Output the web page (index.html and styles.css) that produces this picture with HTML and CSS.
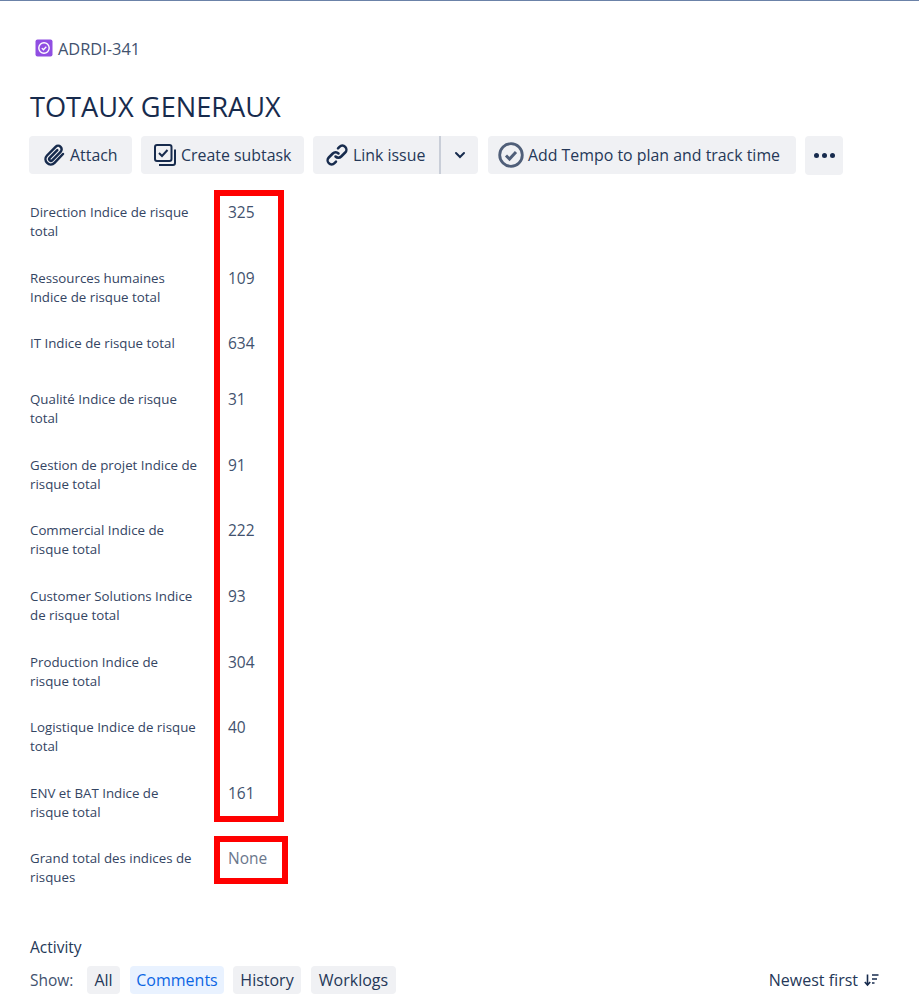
FILE: index.html
```html
<!DOCTYPE html>
<html lang="en">
<head>
<meta charset="utf-8">
<title>ADRDI-341</title>
<link rel="stylesheet" href="styles.css">
</head>
<body>
<main class="page">
  <div class="crumb">
    <svg class="crumb-icon" viewBox="0 0 18 18"><rect x="0.5" y="0.5" width="17" height="17" rx="2" fill="#904ee2"/><circle cx="9" cy="9" r="5.2" fill="none" stroke="#fff" stroke-width="1.4"/><path d="M6.8 9.1l1.6 1.6 2.9-3" fill="none" stroke="#fff" stroke-width="1.3"/></svg>
    <span>ADRDI-341</span>
  </div>
  <h1 class="title">TOTAUX GENERAUX</h1>
  <div class="toolbar">
    <button class="btn btn-attach"><svg class="ico" viewBox="0 0 24 24"><path d="M21 11l-8.500 8.800a5.200 5.200 0 0 1-7.500-7.300L13.600 3.800a3.500 3.500 0 0 1 5 5l-8.400 8.500a1.700 1.700 0 0 1-2.500-2.400l7.600-7.700" fill="none" stroke="#172b4d" stroke-width="2.500" stroke-linecap="round"/></svg>Attach</button>
    <button class="btn btn-sub"><svg class="ico" viewBox="0 0 24 24"><rect x="2" y="2" width="16.500" height="16" rx="2" fill="none" stroke="#172b4d" stroke-width="2"/><path d="M6 10l3 3 5.500-6" fill="none" stroke="#172b4d" stroke-width="2"/><path d="M22 6.500V20a2 2 0 0 1-2 2H6" fill="none" stroke="#172b4d" stroke-width="2"/></svg>Create subtask</button>
    <div class="split">
      <button class="btn btn-link"><svg class="ico" viewBox="0 0 24 24"><path d="M10.500 13.500a4 4 0 0 0 5.700 0l4-4a4 4 0 0 0-5.700-5.700l-1.500 1.500" fill="none" stroke="#172b4d" stroke-width="2.500" stroke-linecap="round"/><path d="M13.500 10.500a4 4 0 0 0-5.700 0l-4 4a4 4 0 0 0 5.700 5.700l1.500-1.500" fill="none" stroke="#172b4d" stroke-width="2.500" stroke-linecap="round"/></svg>Link issue</button>
      <button class="btn btn-chev"><svg class="chev" viewBox="0 0 12 8"><path d="M2 2l4 4 4-4" fill="none" stroke="#172b4d" stroke-width="2" stroke-linecap="round"/></svg></button>
    </div>
    <button class="btn btn-tempo"><svg class="ico-tempo" viewBox="0 0 26 26"><circle cx="13" cy="13" r="11.300" fill="none" stroke="#505f79" stroke-width="2.800"/><path d="M8 13.500l3.500 3.500 6.500-7" fill="none" stroke="#505f79" stroke-width="3"/></svg>Add Tempo to plan and track time</button>
    <button class="btn btn-more"><span class="dot"></span><span class="dot"></span><span class="dot"></span></button>
  </div>

  <div class="fields">
    <div class="field"><div class="label">Direction Indice de risque total</div><div class="value">325</div></div>
    <div class="field"><div class="label">Ressources humaines Indice de risque total</div><div class="value">109</div></div>
    <div class="field field-short"><div class="label">IT Indice de risque total</div><div class="value">634</div></div>
    <div class="field"><div class="label">Qualité Indice de risque total</div><div class="value">31</div></div>
    <div class="field"><div class="label">Gestion de projet Indice de risque total</div><div class="value">91</div></div>
    <div class="field"><div class="label">Commercial Indice de risque total</div><div class="value">222</div></div>
    <div class="field"><div class="label">Customer Solutions Indice de risque total</div><div class="value">93</div></div>
    <div class="field"><div class="label">Production Indice de risque total</div><div class="value">304</div></div>
    <div class="field"><div class="label">Logistique Indice de risque total</div><div class="value">40</div></div>
    <div class="field"><div class="label">ENV et BAT Indice de risque total</div><div class="value">161</div></div>
    <div class="field"><div class="label">Grand total des indices de risques</div><div class="value value-none">None</div></div>
    <div class="mark mark-a"></div>
    <div class="mark mark-b"></div>
  </div>

  <h2 class="activity">Activity</h2>
  <div class="filters">
    <span class="show">Show:</span>
    <button class="chip chip-all">All</button>
    <button class="chip chip-on">Comments</button>
    <button class="chip chip-his">History</button>
    <button class="chip chip-wor">Worklogs</button>
    <span class="sort">Newest first<svg class="sort-ico" viewBox="0 0 16 16"><path d="M4.500 2.500v10M1.800 10l2.700 3 2.700-3" fill="none" stroke="#172b4d" stroke-width="1.600"/><path d="M9 3h6.500M9 7h5M9 11h2.500" fill="none" stroke="#172b4d" stroke-width="1.500"/></svg></span>
  </div>
</main>
</body>
</html>
```
FILE: styles.css
```css
* { box-sizing: border-box; }
html, body { margin: 0; height: 999px; overflow: hidden; background: #fff; }
body { font-family: "Open Sans", "Noto Sans", "Liberation Sans", sans-serif; color: #172b4d; border-top: 1px solid #6b82a8; }
.page { padding: 0 40px 0 30px; }
.crumb { display: flex; align-items: center; gap: 5px; padding: 36px 0 0 5px; height: 58px; font-size: 16.400px; color: #42526e; }
.crumb-icon { width: 18px; height: 18px; flex: none; }
.title { margin: 29px 0 0; height: 37px; font-size: 27.200px; line-height: 37px; font-weight: 500; color: #172b4d; }
.toolbar { display: flex; gap: 9px; margin: 11px 0 0 -1px; align-items: flex-start; }
.btn { display: flex; align-items: center; justify-content: center; height: 38px; border: 0; border-radius: 4px; background: #f0f1f4; font: inherit; font-size: 15.900px; color: #253858; padding: 0; white-space: nowrap; }
.ico { width: 24px; height: 24px; margin-right: 4px; flex: none; }
.ico-tempo { width: 26px; height: 26px; margin-right: 4px; flex: none; }
.btn-attach { width: 103px; justify-content: flex-start; padding-left: 13px; }
.btn-sub { width: 163px; justify-content: flex-start; padding-left: 12px; }
.split { display: flex; }
.btn-link { width: 126px; border-radius: 4px 0 0 4px; justify-content: flex-start; padding-left: 12px; }
.btn-chev { width: 39px; border-left: 2px solid #c9ced8; border-radius: 0 4px 4px 0; }
.chev { width: 12px; height: 8px; }
.btn-tempo { width: 308px; margin-left: 1px; justify-content: flex-start; padding-left: 10px; }
.btn-more { width: 38px; height: 39px; gap: 3px; }
.dot { width: 5px; height: 5px; border-radius: 50%; background: #172b4d; }
.fields { position: relative; margin-top: 27px; width: 300px; }
.field { display: grid; grid-template-columns: 169px 1fr; column-gap: 29px; min-height: 65.600px; padding-top: 1px; }
.field-short { min-height: 56px; }
.label { font-size: 13.300px; line-height: 19px; font-weight: 500; color: #344563; }
.value { font-size: 15.500px; line-height: 20px; color: #42526e; margin-top: -1px; }
.value-none { color: #6b778c; }
.mark { position: absolute; border: 6px solid #ff0000; pointer-events: none; }
.mark-a { left: 184px; top: -12px; width: 70px; height: 632px; }
.mark-b { left: 184px; top: 634px; width: 74px; height: 48px; }
.activity { margin: 22px 0 0; height: 22px; font-size: 15.500px; line-height: 22px; font-weight: 500; color: #253858; }
.filters { display: flex; align-items: center; margin-top: 8px; height: 28px; position: relative; }
.show { width: 57px; font-size: 15.500px; color: #42526e; }
.chip { height: 28px; border: 0; border-radius: 4px; background: #f0f1f4; font: inherit; font-size: 16px; color: #253858; padding: 0; margin-right: 9px; }
.chip-all { width: 33px; margin-right: 10px; }
.chip-on { width: 94px; background: #e9f2ff; color: #0c66e4; }
.chip-his { width: 68px; margin-right: 10px; }
.chip-wor { width: 85px; }
.sort { display: flex; align-items: center; margin-left: auto; font-size: 16px; color: #253858; }
.sort-ico { width: 16px; height: 16px; margin-left: 5px; }
```
